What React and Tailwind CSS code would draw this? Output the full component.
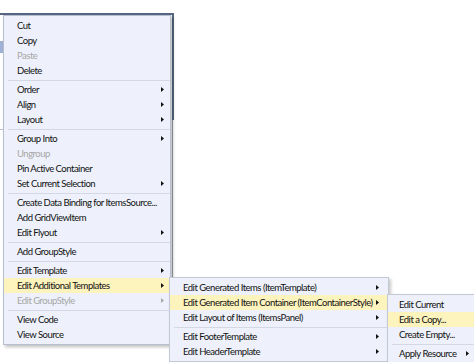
import React from 'react';

const FONT = { fontFamily: 'Lato, "Noto Sans", sans-serif' };

const mainItems = [
  { label: 'Cut' },
  { label: 'Copy' },
  { label: 'Paste', disabled: true },
  { label: 'Delete' },
  { sep: true },
  { label: 'Order', sub: true },
  { label: 'Align', sub: true },
  { label: 'Layout', sub: true },
  { sep: true },
  { label: 'Group Into', sub: true },
  { label: 'Ungroup', disabled: true },
  { label: 'Pin Active Container' },
  { label: 'Set Current Selection', sub: true },
  { sep: true },
  { label: 'Create Data Binding for ItemsSource...' },
  { label: 'Add GridViewItem' },
  { label: 'Edit Flyout', sub: true },
  { sep: true },
  { label: 'Add GroupStyle' },
  { sep: true },
  { label: 'Edit Template', sub: true },
  { label: 'Edit Additional Templates', sub: true, active: true },
  { label: 'Edit GroupStyle', sub: true, disabled: true },
  { sep: true },
  { label: 'View Code' },
  { label: 'View Source' },
];

const templateItems = [
  { label: 'Edit Generated Items (ItemTemplate)', sub: true },
  { label: 'Edit Generated Item Container (ItemContainerStyle)', sub: true, active: true },
  { label: 'Edit Layout of Items (ItemsPanel)', sub: true },
  { sep: true },
  { label: 'Edit FooterTemplate', sub: true },
  { label: 'Edit HeaderTemplate', sub: true },
];

const styleItems = [
  { label: 'Edit Current' },
  { label: 'Edit a Copy...', active: true },
  { label: 'Create Empty...' },
  { sep: true },
  { label: 'Apply Resource', sub: true },
];

function Arrow({ disabled }) {
  return (
    <svg width="3" height="5" viewBox="0 0 3 5" className="shrink-0">
      <path d="M0 0 L3 2.5 L0 5 Z" fill={disabled ? '#a8a8a8' : '#111'} />
    </svg>
  );
}

function MenuList({ items, padLeft, padRight, sepLeft }) {
  return items.map((it, i) =>
    it.sep ? (
      <div key={i} className="h-[4px] flex items-center" style={{ paddingLeft: sepLeft }}>
        <div className="h-px w-full bg-[#d3d8e4]" />
      </div>
    ) : (
      <div
        key={i}
        className={`h-[15px] flex items-center justify-between whitespace-nowrap text-[9.5px] leading-none tracking-[-0.5px] ${
          it.active ? 'bg-[#fdf3bd]' : ''
        } ${it.disabled ? 'text-[#a6a6a6]' : 'text-[#111111]'}`}
        style={{ paddingLeft: padLeft, paddingRight: padRight }}
      >
        <span>{it.label}</span>
        {it.sub && <Arrow disabled={it.disabled} />}
      </div>
    )
  );
}

export default function App() {
  return (
    <div className="relative w-[474px] h-[362px] overflow-hidden bg-white" style={FONT}>
      {/* designer surface behind the menu */}
      <div className="mt-[13px] w-[174px] h-[107px] border-t-2 border-r-2 border-[#566682] bg-white">
        <div className="mt-[26px] w-[3px] h-[12px] bg-[#9fb2d6]" />
        <div className="mt-[76px] w-[3px] h-px bg-[#b9c2d3]" />
      </div>
      <div className="w-[173px] h-[158px] border-r border-[#9aa1ad]" />

      {/* main context menu */}
      <div className="absolute left-[3px] top-[15px] w-[168px] border border-[#b7bfce] bg-[#eef1fb] py-[2px] shadow-[2px_2px_3px_rgba(0,0,0,0.25)]">
        <MenuList items={mainItems} padLeft={13} padRight={6} sepLeft={4} />
      </div>

      {/* Edit Additional Templates submenu */}
      <div className="absolute left-[169px] top-[277px] w-[220px] border border-[#c2c8d4] bg-[#eef1fb] py-[2px] shadow-[2px_2px_3px_rgba(0,0,0,0.22)]">
        <MenuList items={templateItems} padLeft={13} padRight={9} sepLeft={4} />
      </div>

      {/* ItemContainerStyle submenu */}
      <div className="absolute left-[387px] top-[294px] w-[92px] border border-[#c2c8d4] bg-[#eef1fb] py-[2px] shadow-[2px_2px_3px_rgba(0,0,0,0.22)]">
        <MenuList items={styleItems} padLeft={11} padRight={9} sepLeft={4} />
      </div>
    </div>
  );
}
